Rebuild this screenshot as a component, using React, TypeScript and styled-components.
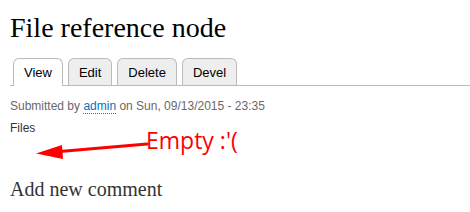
import React from "react";
import styled, { createGlobalStyle } from "styled-components";

const Global = createGlobalStyle`
  html, body { margin: 0; padding: 0; background: #fff; }
  body { font-family: "Liberation Sans", Arial, sans-serif; }
`;

const Page = styled.div`
  padding: 11px 0 0 10px;
  display: flex;
  flex-direction: column;
`;

const Title = styled.h1`
  margin: 0;
  font-family: "Liberation Serif", "Times New Roman", serif;
  font-weight: normal;
  font-size: 28px;
  line-height: 34px;
  color: #000;
`;

const Tabs = styled.ul`
  list-style: none;
  margin: 13px 0 0 0;
  padding: 0 0 0 3px;
  display: flex;
  gap: 5px;
  border-bottom: 1px solid #bbb;
`;

const Tab = styled.li<{ $active?: boolean }>`
  font-size: 13px;
  line-height: 15px;
  padding: 6px 10px 5px;
  border: 1px solid #bbb;
  border-bottom: none;
  border-radius: 6px 6px 0 0;
  background: ${(p) => (p.$active ? "#fff" : "#eee")};
  color: #000;
  margin-bottom: ${(p) => (p.$active ? "-1px" : "0")};
  padding-bottom: ${(p) => (p.$active ? "6px" : "5px")};
`;

const Meta = styled.div`
  margin-top: 11px;
  font-size: 12px;
  line-height: 18px;
  color: #68696b;
`;

const UserLink = styled.a`
  color: #0074bd;
  text-decoration: none;
  border-bottom: 1px dotted #0074bd;
`;

const Field = styled.div`
  position: relative;
  margin-top: 4px;
  height: 58px;
`;

const FieldLabel = styled.div`
  font-size: 12px;
  line-height: 18px;
  color: #333;
`;

const Annotation = styled.div`
  position: absolute;
  left: 136px;
  top: 6px;
  font-family: "Open Sans", "Noto Sans", sans-serif;
  font-size: 23px;
  line-height: 30px;
  color: #ff0000;
`;

const Arrow = styled.svg`
  position: absolute;
  left: 24px;
  top: 18px;
`;

const CommentTitle = styled.h2`
  margin: 0;
  font-family: "Liberation Serif", "Times New Roman", serif;
  font-weight: normal;
  font-size: 20px;
  line-height: 24px;
  color: #333;
`;

export default function App() {
  return (
    <>
      <Global />
      <Page>
        <Title>File reference node</Title>
        <Tabs>
          <Tab $active>View</Tab>
          <Tab>Edit</Tab>
          <Tab>Delete</Tab>
          <Tab>Devel</Tab>
        </Tabs>
        <Meta>
          Submitted by <UserLink href="#">admin</UserLink> on Sun, 09/13/2015 - 23:35
        </Meta>
        <Field>
          <FieldLabel>Files</FieldLabel>
          <Annotation>Empty :'(</Annotation>
          <Arrow width="120" height="24" viewBox="0 0 120 24">
            <line x1="113" y1="7" x2="20" y2="15" stroke="#f00" strokeWidth="3.2" strokeLinecap="round" />
            <polygon points="2,16.5 28,8 29,22" fill="#f00" />
          </Arrow>
        </Field>
        <CommentTitle>Add new comment</CommentTitle>
      </Page>
    </>
  );
}
